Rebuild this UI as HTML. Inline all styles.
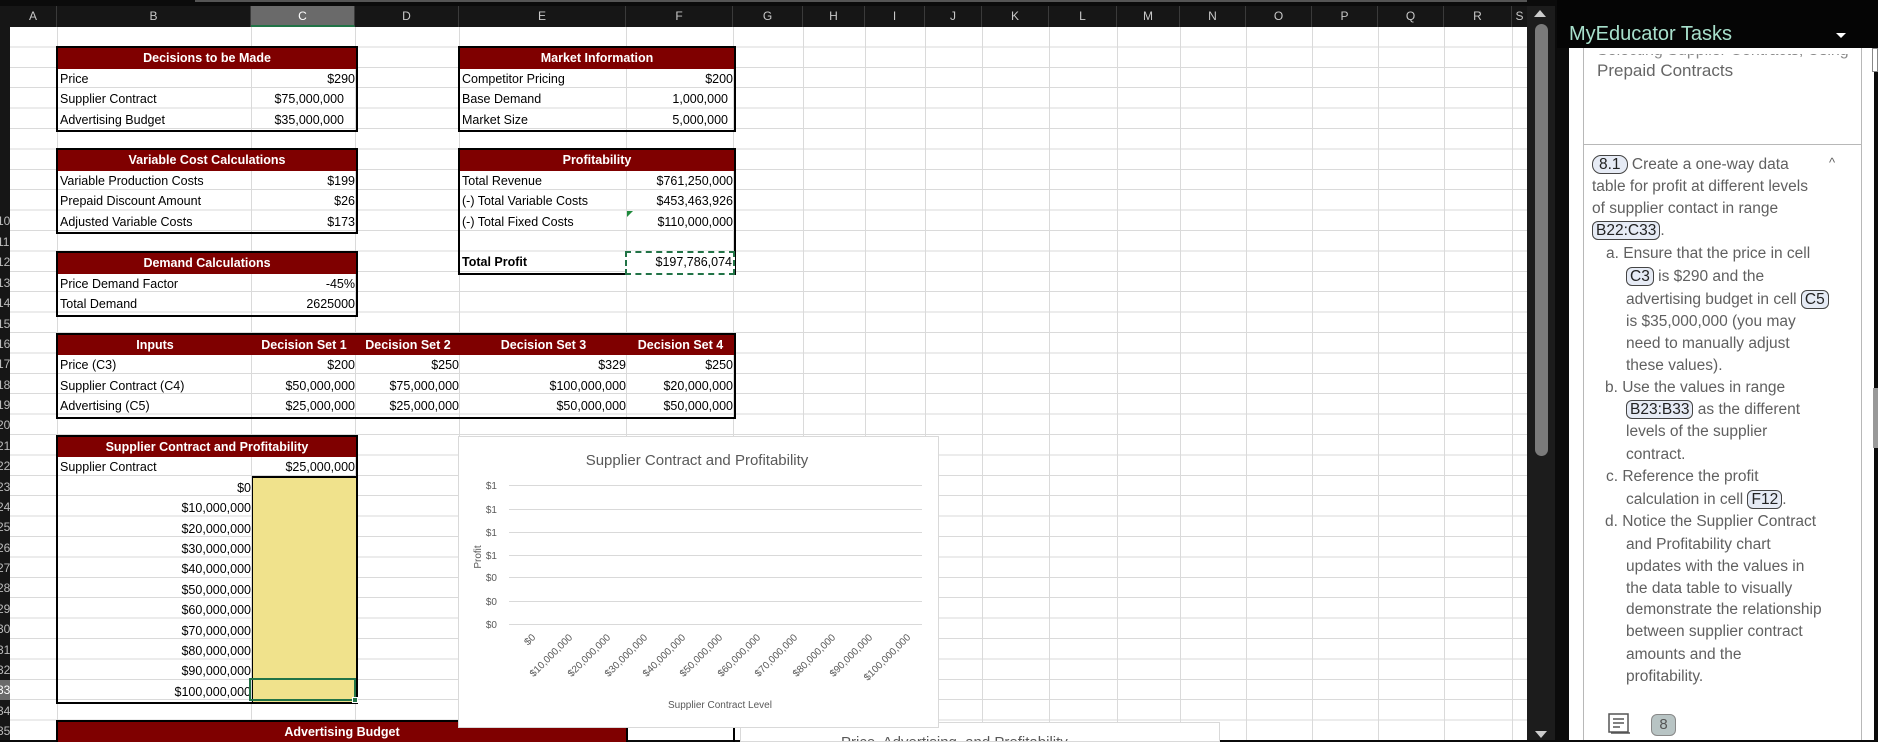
<!DOCTYPE html>
<html><head><meta charset="utf-8">
<style>
*{margin:0;padding:0;box-sizing:border-box}
body{width:1878px;height:740px;overflow:hidden;background:#0b0b0b;font-family:"Liberation Sans",Arial,sans-serif;position:relative}
.abs{position:absolute}
#sheet{position:absolute;left:10px;top:27px;width:1517px;height:713px;background:#fff;
background-image:repeating-linear-gradient(to bottom,transparent 0,transparent 19.4px,#dadada 19.4px,#dadada 20.4px)}
.vl{position:absolute;top:27px;height:713px;width:1px;background:#dadada}
.ch{position:absolute;top:6px;height:21px;color:#c8c8c8;font-size:12px;text-align:center;line-height:21px;border-right:1px solid #3a3a3a}
.t{position:absolute;border:2px solid #000;display:grid;grid-auto-rows:20.4px;font-size:12.5px;color:#000}
.t div{line-height:20.4px;white-space:nowrap;overflow:visible}
.h{background:#7f0000;color:#fff;font-weight:bold;text-align:center}
.l{padding-left:2px}
.r{text-align:right;padding-right:1px}
.y{background:#f0e28c;border-left:1px solid #000}
.pt{position:absolute;left:1597px;font-size:15.5px;color:#606060;white-space:nowrap;line-height:22px}
.chip{display:inline-block;border:1px solid #444;border-radius:6px;background:#e6ebf5;color:#222;padding:0 3px;line-height:17px}
.rn{position:absolute;left:0;width:10px;height:20.4px;color:#bbb;font-size:12px;line-height:20px;overflow:hidden;text-indent:-3px}
</style></head><body>
<div class="abs" style="left:195px;top:0;width:1332px;height:2px;background:#555"></div>
<div class="abs" style="left:0;top:6px;width:1527px;height:21px;background:#161616"></div>
<div class="ch" style="left:10px;width:47px">A</div>
<div class="ch" style="left:57px;width:194px">B</div>
<div class="ch" style="left:251px;width:104px;background:#6a6a6a;color:#fff;border-bottom:2px solid #217346">C</div>
<div class="ch" style="left:355px;width:104px">D</div>
<div class="ch" style="left:459px;width:167px">E</div>
<div class="ch" style="left:626px;width:107px">F</div>
<div class="ch" style="left:733px;width:70px">G</div>
<div class="ch" style="left:803px;width:62px">H</div>
<div class="ch" style="left:865px;width:60px">I</div>
<div class="ch" style="left:925px;width:57px">J</div>
<div class="ch" style="left:982px;width:67px">K</div>
<div class="ch" style="left:1049px;width:68px">L</div>
<div class="ch" style="left:1117px;width:63px">M</div>
<div class="ch" style="left:1180px;width:66px">N</div>
<div class="ch" style="left:1246px;width:66px">O</div>
<div class="ch" style="left:1312px;width:66px">P</div>
<div class="ch" style="left:1378px;width:66px">Q</div>
<div class="ch" style="left:1444px;width:68px">R</div>
<div class="ch" style="left:1512px;width:15px;border:none">S</div>
<div id="sheet"></div>
<div class="abs" style="left:0;top:27px;width:10px;height:713px;background:#161616"></div>
<div class="abs" style="left:0;top:680px;width:10px;height:20.4px;background:#6a6a6a"></div>
<div class="rn" style="top:211px">10</div><div class="rn" style="top:232px">11</div><div class="rn" style="top:252px">12</div><div class="rn" style="top:273px">13</div><div class="rn" style="top:293px">14</div><div class="rn" style="top:314px">15</div><div class="rn" style="top:334px">16</div><div class="rn" style="top:354px">17</div><div class="rn" style="top:375px">18</div><div class="rn" style="top:395px">19</div><div class="rn" style="top:415px">20</div><div class="rn" style="top:436px">21</div><div class="rn" style="top:456px">22</div><div class="rn" style="top:477px">23</div><div class="rn" style="top:497px">24</div><div class="rn" style="top:517px">25</div><div class="rn" style="top:538px">26</div><div class="rn" style="top:558px">27</div><div class="rn" style="top:578px">28</div><div class="rn" style="top:599px">29</div><div class="rn" style="top:619px">30</div><div class="rn" style="top:640px">31</div><div class="rn" style="top:660px">32</div><div class="rn" style="top:680px;color:#fff">33</div><div class="rn" style="top:701px">34</div><div class="rn" style="top:721px">35</div>
<div class="vl" style="left:57px"></div><div class="vl" style="left:251px"></div><div class="vl" style="left:355px"></div>
<div class="vl" style="left:459px"></div><div class="vl" style="left:626px"></div><div class="vl" style="left:733px"></div>
<div class="vl" style="left:803px"></div><div class="vl" style="left:865px"></div><div class="vl" style="left:925px"></div>
<div class="vl" style="left:982px"></div><div class="vl" style="left:1049px"></div><div class="vl" style="left:1117px"></div>
<div class="vl" style="left:1180px"></div><div class="vl" style="left:1246px"></div><div class="vl" style="left:1312px"></div>
<div class="vl" style="left:1378px"></div><div class="vl" style="left:1444px"></div><div class="vl" style="left:1512px"></div>

<div class="t" style="left:56px;top:46.4px;grid-template-columns:194px 104px">
<div class="h" style="grid-column:1/3">Decisions to be Made</div>
<div class="l">Price</div><div class="r">$290</div>
<div class="l">Supplier Contract</div><div class="r" style="padding-right:12px">$75,000,000</div>
<div class="l">Advertising Budget</div><div class="r" style="padding-right:12px">$35,000,000</div>
</div>
<div class="t" style="left:458px;top:46.4px;grid-template-columns:167px 107px">
<div class="h" style="grid-column:1/3">Market Information</div>
<div class="l">Competitor Pricing</div><div class="r">$200</div>
<div class="l">Base Demand</div><div class="r" style="padding-right:6px">1,000,000</div>
<div class="l">Market Size</div><div class="r" style="padding-right:6px">5,000,000</div>
</div>
<div class="t" style="left:56px;top:148.4px;grid-template-columns:194px 104px">
<div class="h" style="grid-column:1/3">Variable Cost Calculations</div>
<div class="l">Variable Production Costs</div><div class="r">$199</div>
<div class="l">Prepaid Discount Amount</div><div class="r">$26</div>
<div class="l">Adjusted Variable Costs</div><div class="r">$173</div>
</div>
<div class="t" style="left:458px;top:148.4px;grid-template-columns:167px 107px">
<div class="h" style="grid-column:1/3">Profitability</div>
<div class="l">Total Revenue</div><div class="r">$761,250,000</div>
<div class="l">(-) Total Variable Costs</div><div class="r">$453,463,926</div>
<div class="l">(-) Total Fixed Costs</div><div class="r">$110,000,000</div>
<div></div><div></div>
<div class="l" style="font-weight:bold">Total Profit</div><div></div>
</div>
<div class="abs" style="left:625px;top:251px;width:110px;height:24px;background:#fff;border:2px dashed #217346;font-size:12.5px;text-align:right;line-height:19px;padding-right:1px">$197,786,074</div>
<div class="abs" style="left:627px;top:211px;width:0;height:0;border-top:6px solid #1e8a3c;border-right:6px solid transparent"></div>
<div class="t" style="left:56px;top:251.4px;grid-template-columns:194px 104px">
<div class="h" style="grid-column:1/3">Demand Calculations</div>
<div class="l">Price Demand Factor</div><div class="r">-45%</div>
<div class="l">Total Demand</div><div class="r">2625000</div>
</div>
<div class="t" style="left:56px;top:333px;grid-template-columns:194px 104px 104px 167px 107px">
<div class="h">Inputs</div><div class="h">Decision Set 1</div><div class="h">Decision Set 2</div><div class="h">Decision Set 3</div><div class="h">Decision Set 4</div>
<div class="l">Price (C3)</div><div class="r">$200</div><div class="r">$250</div><div class="r">$329</div><div class="r">$250</div>
<div class="l">Supplier Contract (C4)</div><div class="r">$50,000,000</div><div class="r">$75,000,000</div><div class="r">$100,000,000</div><div class="r">$20,000,000</div>
<div class="l">Advertising (C5)</div><div class="r">$25,000,000</div><div class="r">$25,000,000</div><div class="r">$50,000,000</div><div class="r">$50,000,000</div>
</div>
<div class="t" style="left:56px;top:435px;grid-template-columns:194px 104px">
<div class="h" style="grid-column:1/3">Supplier Contract and Profitability</div>
<div class="l">Supplier Contract</div><div class="r" style="border-bottom:2px solid #000">$25,000,000</div>
<div class="r">$0</div><div class="y"></div>
<div class="r">$10,000,000</div><div class="y"></div>
<div class="r">$20,000,000</div><div class="y"></div>
<div class="r">$30,000,000</div><div class="y"></div>
<div class="r">$40,000,000</div><div class="y"></div>
<div class="r">$50,000,000</div><div class="y"></div>
<div class="r">$60,000,000</div><div class="y"></div>
<div class="r">$70,000,000</div><div class="y"></div>
<div class="r">$80,000,000</div><div class="y"></div>
<div class="r">$90,000,000</div><div class="y"></div>
<div class="r">$100,000,000</div><div class="y"></div>
</div>
<div class="abs" style="left:249px;top:678px;width:107px;height:23px;border:2px solid #217346"></div>
<div class="abs" style="left:352px;top:697px;width:6px;height:6px;background:#217346;border:1px solid #fff"></div>

<div class="abs" style="left:56px;top:719.6px;width:572px;height:22px;background:#7f0000;border:2px solid #000;border-bottom:none;color:#fff;font-weight:bold;font-size:12.5px;text-align:center;line-height:20px">Advertising Budget</div>
<div class="abs" style="left:626px;top:719.6px;width:109px;height:22px;border-top:2px solid #000;border-right:2px solid #000"></div>
<div class="abs" style="left:740px;top:722px;width:480px;height:20px;background:#fff;border:1px solid #d9d9d9;overflow:hidden"><div style="margin-top:11px;margin-left:100px;font-size:15px;color:#595959">Price, Advertising, and Profitability</div></div>

<svg class="abs" style="left:458px;top:436px" width="481" height="292" xmlns="http://www.w3.org/2000/svg" font-family="Liberation Sans, sans-serif">
<rect x="0.5" y="0.5" width="480" height="291" fill="#fff" stroke="#d9d9d9"/>
<text x="239" y="29" font-size="15" fill="#595959" text-anchor="middle">Supplier Contract and Profitability</text>
<g stroke="#d9d9d9" stroke-width="1">
<line x1="51" x2="464" y1="49.5" y2="49.5"/><line x1="51" x2="464" y1="73.5" y2="73.5"/><line x1="51" x2="464" y1="96.5" y2="96.5"/>
<line x1="51" x2="464" y1="119.5" y2="119.5"/><line x1="51" x2="464" y1="141.5" y2="141.5"/><line x1="51" x2="464" y1="165.5" y2="165.5"/><line x1="51" x2="464" y1="188.5" y2="188.5"/>
</g>
<g font-size="10" fill="#595959" text-anchor="end">
<text x="39" y="53">$1</text><text x="39" y="77">$1</text><text x="39" y="100">$1</text><text x="39" y="123">$1</text>
<text x="39" y="145">$0</text><text x="39" y="169">$0</text><text x="39" y="192">$0</text>
</g>
<text transform="translate(23,121) rotate(-90)" font-size="10" fill="#595959" text-anchor="middle">Profit</text>
<g font-size="10" fill="#595959" text-anchor="end">
<text transform="translate(78,202) rotate(-45)">$0</text>
<text transform="translate(115,202) rotate(-45)">$10,000,000</text>
<text transform="translate(153,202) rotate(-45)">$20,000,000</text>
<text transform="translate(190,202) rotate(-45)">$30,000,000</text>
<text transform="translate(228,202) rotate(-45)">$40,000,000</text>
<text transform="translate(265,202) rotate(-45)">$50,000,000</text>
<text transform="translate(303,202) rotate(-45)">$60,000,000</text>
<text transform="translate(340,202) rotate(-45)">$70,000,000</text>
<text transform="translate(378,202) rotate(-45)">$80,000,000</text>
<text transform="translate(415,202) rotate(-45)">$90,000,000</text>
<text transform="translate(453,202) rotate(-45)">$100,000,000</text>
</g>
<text x="262" y="272" font-size="10" fill="#595959" text-anchor="middle">Supplier Contract Level</text>
</svg>

<div class="abs" style="left:1527px;top:6px;width:28px;height:734px;background:#1c1c1c"></div>
<div class="abs" style="left:1534px;top:10px;width:0;height:0;border-left:6px solid transparent;border-right:6px solid transparent;border-bottom:7px solid #ccc"></div>
<div class="abs" style="left:1535px;top:24px;width:13px;height:432px;background:#7a7a7a;border-radius:7px"></div>
<div class="abs" style="left:1535px;top:731px;width:0;height:0;border-left:6px solid transparent;border-right:6px solid transparent;border-top:7px solid #ccc"></div>

<div class="abs" style="left:1557px;top:0;width:321px;height:48px;background:#050505"></div>
<div class="abs" style="left:1569px;top:22px;font-size:20px;color:#a8e0cc;line-height:24px">MyEducator Tasks</div>
<div class="abs" style="left:1836px;top:33px;width:0;height:0;border-left:5px solid transparent;border-right:5px solid transparent;border-top:5px solid #fff"></div>
<div class="abs" style="left:1569px;top:48px;width:305px;height:692px;background:#fff"></div>
<div class="abs" style="left:1583px;top:48px;width:279px;height:692px;border-left:1px solid #b8b8b8;border-right:1px solid #b8b8b8"></div>
<div class="abs" style="left:1583px;top:144px;width:279px;height:1px;background:#b8b8b8"></div>
<div class="abs" style="left:1872px;top:48px;width:6px;height:24px;border:1px solid #888;background:#fff"></div>
<div class="abs" style="left:1873px;top:388px;width:5px;height:60px;background:#999"></div>
<div class="pt" style="top:40px;font-size:16px;color:#888;clip-path:inset(14px 0 0 0)">Selecting Supplier Contracts, Using</div>
<div class="pt" style="top:60px;font-size:17px;color:#666">Prepaid Contracts</div>

<div class="pt" style="left:1592px;top:154px"><span class="chip" style="border-radius:9px;padding:0 6px">8.1</span> Create a one-way data</div>
<div class="pt" style="left:1829px;top:152px;font-size:13px">^</div>
<div class="pt" style="left:1592px;top:176px">table for profit at different levels</div>
<div class="pt" style="left:1592px;top:198px">of supplier contact in range</div>
<div class="pt" style="left:1592px;top:220px"><span class="chip">B22:C33</span>.</div>
<div class="pt" style="left:1606px;top:243px">a. Ensure that the price in cell</div>
<div class="pt" style="left:1626px;top:266px"><span class="chip">C3</span> is $290 and the</div>
<div class="pt" style="left:1626px;top:289px">advertising budget in cell <span class="chip">C5</span></div>
<div class="pt" style="left:1626px;top:311px">is $35,000,000 (you may</div>
<div class="pt" style="left:1626px;top:333px">need to manually adjust</div>
<div class="pt" style="left:1626px;top:355px">these values).</div>
<div class="pt" style="left:1605px;top:377px">b. Use the values in range</div>
<div class="pt" style="left:1626px;top:399px"><span class="chip">B23:B33</span> as the different</div>
<div class="pt" style="left:1626px;top:421px">levels of the supplier</div>
<div class="pt" style="left:1626px;top:444px">contract.</div>
<div class="pt" style="left:1606px;top:466px">c. Reference the profit</div>
<div class="pt" style="left:1626px;top:489px">calculation in cell <span class="chip">F12</span>.</div>
<div class="pt" style="left:1605px;top:511px">d. Notice the Supplier Contract</div>
<div class="pt" style="left:1626px;top:534px">and Profitability chart</div>
<div class="pt" style="left:1626px;top:556px">updates with the values in</div>
<div class="pt" style="left:1626px;top:578px">the data table to visually</div>
<div class="pt" style="left:1626px;top:599px">demonstrate the relationship</div>
<div class="pt" style="left:1626px;top:621px">between supplier contract</div>
<div class="pt" style="left:1626px;top:644px">amounts and the</div>
<div class="pt" style="left:1626px;top:666px">profitability.</div>
<svg class="abs" style="left:1608px;top:713px" width="24" height="22"><rect x="1" y="1" width="19" height="18" fill="none" stroke="#555" stroke-width="1.5"/><line x1="5" y1="6" x2="16" y2="6" stroke="#555" stroke-width="1.5"/><line x1="5" y1="10" x2="16" y2="10" stroke="#555" stroke-width="1.5"/><line x1="5" y1="14" x2="12" y2="14" stroke="#555" stroke-width="1.5"/><line x1="3" y1="20" x2="22" y2="20" stroke="#555" stroke-width="1.5"/></svg>
<div class="abs" style="left:1651px;top:714px;width:25px;height:22px;border:1.5px solid #888;border-radius:6px;background:#b8c4c4;color:#555;font-size:15px;text-align:center;line-height:19px">8</div>
</body></html>
